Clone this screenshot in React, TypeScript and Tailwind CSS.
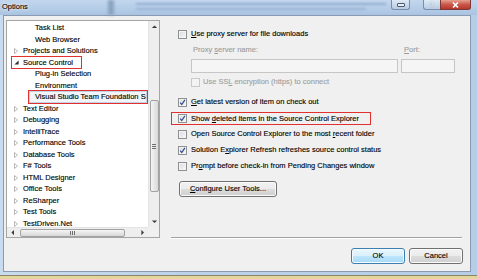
import React from 'react';

type Item = { label: string; level: 0 | 1; exp?: 'closed' | 'open'; mark?: boolean; selected?: boolean };

const tree: Item[] = [
  { label: 'Task List', level: 1 },
  { label: 'Web Browser', level: 1 },
  { label: 'Projects and Solutions', level: 0, exp: 'closed' },
  { label: 'Source Control', level: 0, exp: 'open', mark: true },
  { label: 'Plug-in Selection', level: 1 },
  { label: 'Environment', level: 1 },
  { label: 'Visual Studio Team Foundation Server', level: 1, selected: true },
  { label: 'Text Editor', level: 0, exp: 'closed' },
  { label: 'Debugging', level: 0, exp: 'closed' },
  { label: 'IntelliTrace', level: 0, exp: 'closed' },
  { label: 'Performance Tools', level: 0, exp: 'closed' },
  { label: 'Database Tools', level: 0, exp: 'closed' },
  { label: 'F# Tools', level: 0, exp: 'closed' },
  { label: 'HTML Designer', level: 0, exp: 'closed' },
  { label: 'Office Tools', level: 0, exp: 'closed' },
  { label: 'ReSharper', level: 0, exp: 'closed' },
  { label: 'Test Tools', level: 0, exp: 'closed' },
  { label: 'TestDriven.Net', level: 0, exp: 'closed' },
];

function Expander({ open }: { open: boolean }) {
  return open ? (
    <svg width="5" height="5" viewBox="0 0 5 5">
      <path d="M4.6 0.4 L4.6 4.6 L0.4 4.6 Z" fill="#333" />
    </svg>
  ) : (
    <svg width="4" height="6" viewBox="0 0 4 6">
      <path d="M0.5 0.5 L3.5 3 L0.5 5.5 Z" fill="#fff" stroke="#a6a6a6" strokeWidth="0.8" />
    </svg>
  );
}

function Check({ checked, disabled }: { checked?: boolean; disabled?: boolean }) {
  return (
    <span
      className={
        disabled
          ? 'w-[9px] h-[9px] shrink-0 border border-[#c9c9c9] bg-[#f3f3f3] flex items-center justify-center'
          : 'w-[9px] h-[9px] shrink-0 border border-[#8e8f8f] bg-[linear-gradient(135deg,#d6d9de,#f8f8f8)] shadow-[inset_0_0_0_1px_#f4f4f4] flex items-center justify-center'
      }
    >
      {checked && (
        <svg width="7" height="7" viewBox="0 0 7 7">
          <path d="M1.2 3.6 L2.8 5.6 L5.9 0.9" stroke="#2f4a8a" strokeWidth="1.2" fill="none" />
        </svg>
      )}
    </span>
  );
}

function TreeRow({ item }: { item: Item }) {
  if (item.selected) {
    return (
      <div className="h-[11.5px] flex items-center">
        <div className="ml-[21px] w-[120px] h-[13.5px] shrink-0 border border-[#e2302e] flex">
          <div className="flex-1 border border-[#c3d3e6] bg-[#f1f5fa] flex items-center pl-[5px] overflow-hidden whitespace-nowrap">
            {item.label}
          </div>
        </div>
      </div>
    );
  }
  if (item.mark) {
    return (
      <div className="h-[11.5px] flex items-center">
        <div className="ml-[4px] h-[12.5px] border border-[#e2302e] flex items-center pr-[8px]">
          <span className="ml-[1px] w-[6px] flex items-center justify-center">
            <Expander open />
          </span>
          <span className="ml-[4px] whitespace-nowrap">{item.label}</span>
        </div>
      </div>
    );
  }
  if (item.level === 1) {
    return (
      <div className="h-[11.5px] flex items-center whitespace-nowrap">
        <span className="ml-[28px]">{item.label}</span>
      </div>
    );
  }
  return (
    <div className="h-[11.5px] flex items-center whitespace-nowrap">
      <span className="ml-[6px] w-[6px] flex items-center justify-center">
        <Expander open={item.exp === 'open'} />
      </span>
      <span className="ml-[4px]">{item.label}</span>
    </div>
  );
}

function Arrow({ dir }: { dir: 'up' | 'down' | 'left' | 'right' }) {
  const d =
    dir === 'up'
      ? 'M0 3.5 L3.5 0 L7 3.5 Z'
      : dir === 'down'
      ? 'M0 0 L7 0 L3.5 3.5 Z'
      : dir === 'left'
      ? 'M3.5 0 L3.5 7 L0 3.5 Z'
      : 'M0 0 L3.5 3.5 L0 7 Z';
  const vertical = dir === 'up' || dir === 'down';
  return (
    <svg width={vertical ? 7 : 4} height={vertical ? 4 : 7} viewBox={vertical ? '0 0 7 4' : '0 0 4 7'}>
      <path d={d} fill="#3c3c3c" transform={vertical ? 'scale(0.75) translate(1.2 0.5)' : 'scale(0.75) translate(0.5 1.2)'} />
    </svg>
  );
}

function WinButton({ w, primary, children }: { w: string; primary?: boolean; children: React.ReactNode }) {
  return (
    <div
      className={
        primary
          ? `${w} h-[16px] rounded-[3px] border border-[#3c7fb1] bg-[linear-gradient(to_bottom,#eaf6fd_0%,#d9f0fc_50%,#bee6fd_50%,#a7d9f5_100%)] shadow-[inset_0_0_0_1px_#f4fbff] flex items-center justify-center`
          : `${w} h-[16px] rounded-[3px] border border-[#707070] bg-[linear-gradient(to_bottom,#f2f2f2_0%,#ebebeb_50%,#dddddd_50%,#cfcfcf_100%)] shadow-[inset_0_0_0_1px_#fbfbfb] flex items-center justify-center`
      }
    >
      {children}
    </div>
  );
}

export default function App() {
  return (
    <div className="w-[477px] h-[279px] overflow-hidden bg-[#e3d69c] font-['Liberation_Sans',Arial,sans-serif] text-[7.5px] leading-none text-black [-webkit-text-stroke:0.12px_currentColor]">
      <div className="w-[477px] h-[276px] flex flex-col bg-[linear-gradient(to_right,#c9dbee,#bcd2ea_40%,#b6cde8)] border-b border-[#8b8466]">
        {/* Title bar */}
        <div className="h-[15px] flex items-start bg-[linear-gradient(to_bottom,#c2d7ee,#b2cae6_70%,#a9c3e2)]">
          <span className="ml-[2px] mt-[3px] text-[7.5px] text-black [text-shadow:0_0_4px_#ffffff,0_0_2px_#ffffff]">Options</span>
          <div className="ml-[80px] mt-0 w-[6px] h-[15px] bg-[#8aa3bf] blur-[1.5px]" />
          <div className="ml-[22px] mt-[3px] flex flex-col gap-[3px] blur-[1.2px]">
            <div className="w-[250px] h-[2px] bg-[#93add0]" />
            <div className="w-[230px] h-[2px] bg-[#9ab3d4]" />
          </div>
          <div className="flex-1" />
          <div className="mr-[13px] w-[19px] h-[10px] rounded-b-[3px] border border-t-0 border-[#7b8ea8] bg-[linear-gradient(to_bottom,#dfe9f5,#b7cbe2)] flex items-center justify-center">
            <div className="w-[8px] h-[4px] border border-[#4a5a70] rounded-[1px] bg-[#e8eef6]" />
          </div>
          <div className="w-[17px] h-[10px] rounded-bl-[3px] border border-t-0 border-r-0 border-[#7b8ea8] bg-[linear-gradient(to_bottom,#dfe9f5,#b7cbe2)] flex items-center justify-center text-[7px] font-bold text-[#f8fbff] [text-shadow:0_0_1px_#3d4f66]">
            ?
          </div>
          <div className="mr-[6px] w-[31px] h-[10px] rounded-br-[3px] border border-t-0 border-[#7b3a36] bg-[linear-gradient(to_bottom,#e8a08f,#c9584a_50%,#b8352a)] flex items-center justify-center">
            <svg width="7" height="6" viewBox="0 0 7 6">
              <path d="M1 0.5 L6 5.5 M6 0.5 L1 5.5" stroke="#ffffff" strokeWidth="1.6" />
            </svg>
          </div>
        </div>

        {/* Client area */}
        <div className="ml-[3px] w-[468px] h-[257px] border border-[#8a9ab0] bg-[#f0f0f0] flex flex-col">
          <div className="pl-[2px] pt-[4px] flex items-start">
            {/* Tree */}
            <div className="w-[154px] h-[218px] border border-[#a5a5a5] bg-white flex flex-col">
              <div className="flex h-[206px]">
                <div className="w-[141px] h-[206px] overflow-hidden pt-[1.25px]">
                  {tree.map((it) => (
                    <TreeRow key={it.label} item={it} />
                  ))}
                </div>
                <div className="w-[11px] h-[206px] bg-[#eeeeee] border-l border-[#e4e4e4] flex flex-col">
                  <div className="h-[11px] flex items-center justify-center">
                    <Arrow dir="up" />
                  </div>
                  <div className="flex-1">
                    <div className="mt-[68px] ml-[0.5px] w-[9px] h-[92px] rounded-[2px] border border-[#a2a2a2] bg-[linear-gradient(to_right,#f5f5f5,#e6e6e6_50%,#d9d9d9)] flex flex-col items-center justify-center gap-[1px]">
                      <div className="w-[4px] h-[1px] bg-[#6f6f6f]" />
                      <div className="w-[4px] h-[1px] bg-[#6f6f6f]" />
                      <div className="w-[4px] h-[1px] bg-[#6f6f6f]" />
                    </div>
                  </div>
                  <div className="h-[11px] flex items-center justify-center">
                    <Arrow dir="down" />
                  </div>
                </div>
              </div>
              <div className="flex h-[10px]">
                <div className="w-[141px] h-[10px] bg-[#eeeeee] border-t border-[#e4e4e4] flex items-center">
                  <div className="w-[11px] flex items-center justify-center">
                    <Arrow dir="left" />
                  </div>
                  <div className="ml-[2px] w-[105px] h-[8px] rounded-[2px] border border-[#a2a2a2] bg-[linear-gradient(to_bottom,#f5f5f5,#e6e6e6_50%,#d9d9d9)] flex items-center justify-center gap-[1px]">
                    <div className="w-[1px] h-[4px] bg-[#6f6f6f]" />
                    <div className="w-[1px] h-[4px] bg-[#6f6f6f]" />
                    <div className="w-[1px] h-[4px] bg-[#6f6f6f]" />
                  </div>
                  <div className="flex-1" />
                  <div className="w-[11px] flex items-center justify-center">
                    <Arrow dir="right" />
                  </div>
                </div>
                <div className="w-[11px] h-[10px] bg-[#f0f0f0]" />
              </div>
            </div>

            {/* Right column */}
            <div className="ml-[11px] w-[292px] h-[244px] flex flex-col">
              <div className="mt-[9px] ml-[7px] h-[10px] flex items-center gap-[4px]">
                <Check />
                <span>
                  <u>U</u>se proxy server for file downloads
                </span>
              </div>
              <div className="mt-[6px] ml-[22px] h-[10px] flex items-center text-[#9d9d9d]">
                <span className="w-[211px]">
                  Proxy <u>s</u>erver name:
                </span>
                <span>
                  <u>P</u>ort:
                </span>
              </div>
              <div className="mt-[4px] ml-[20px] flex gap-[3px]">
                <div className="w-[207px] h-[14px] border border-[#c6c6c6] bg-[#f5f5f5]" />
                <div className="w-[54px] h-[14px] border border-[#c6c6c6] bg-[#f5f5f5]" />
              </div>
              <div className="mt-[4px] ml-[20px] h-[10px] flex items-center gap-[3px] text-[#a0a0a0]">
                <Check disabled />
                <span>
                  Use SS<u>L</u> encryption (https) to connect
                </span>
              </div>
              <div className="mt-[10px] ml-[7px] h-[10px] flex items-center gap-[4px]">
                <Check checked />
                <span>
                  <u>G</u>et latest version of item on check out
                </span>
              </div>
              <div className="mt-[5px] w-[200px] h-[13px] border border-[#e2302e] flex items-center pl-[6px] gap-[4px]">
                <Check checked />
                <span>
                  Show <u>d</u>eleted items in the Source Control Explorer
                </span>
              </div>
              <div className="mt-[4px] ml-[7px] h-[10px] flex items-center gap-[4px]">
                <Check />
                <span>
                  Open Source Control Explorer to the most <u>r</u>ecent folder
                </span>
              </div>
              <div className="mt-[6px] ml-[7px] h-[10px] flex items-center gap-[4px]">
                <Check checked />
                <span>
                  Solution E<u>x</u>plorer Refresh refreshes source control status
                </span>
              </div>
              <div className="mt-[6px] ml-[7px] h-[10px] flex items-center gap-[4px]">
                <Check />
                <span>
                  Pr<u>o</u>mpt before check-in from Pending Changes window
                </span>
              </div>
              <div className="mt-[10px] ml-[8px]">
                <WinButton w="w-[98px]">
                  <span>
                    <u>C</u>onfigure User Tools...
                  </span>
                </WinButton>
              </div>
              <div className="flex-1" />
              <div className="h-[2px] w-[291px] border-t border-[#a0a0a0] border-b border-b-white" />
              <div className="mt-[9px] flex justify-end gap-[4px] pr-[0px]">
                <WinButton w="w-[54px]" primary>
                  <span>OK</span>
                </WinButton>
                <WinButton w="w-[54px]">
                  <span>Cancel</span>
                </WinButton>
              </div>
            </div>
          </div>
        </div>
      </div>
    </div>
  );
}
